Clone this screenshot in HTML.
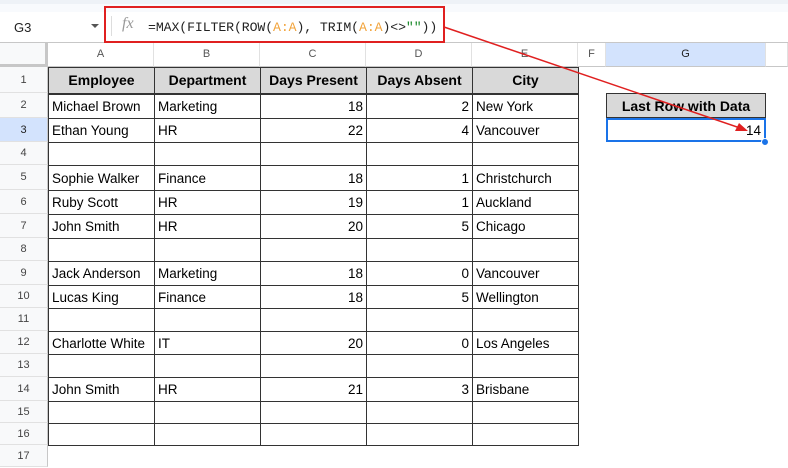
<!DOCTYPE html>
<html><head><meta charset="utf-8"><style>
*{margin:0;padding:0;box-sizing:border-box}
body{width:788px;height:468px;overflow:hidden;background:#fff;font-family:"Liberation Sans",sans-serif;position:relative}
.a{position:absolute}
.rh{position:absolute;left:0;width:48px;background:#f8f9fa;border-bottom:1px solid #e1e1e1;border-right:1px solid #c7c7c7;font-size:11px;color:#444;text-align:center}
.ch{position:absolute;top:43px;height:24px;border-right:1px solid #e1e1e1;border-bottom:1px solid #c7c7c7;background:#fff;font-size:11px;color:#555;text-align:center;line-height:23px}
table{position:absolute;left:48px;top:67px;border-collapse:collapse;table-layout:fixed}
td{border:1px solid #333;font-size:13.5px;color:#000;padding:0 3px;white-space:nowrap;overflow:hidden;font-family:"Liberation Sans",sans-serif}
td.r{text-align:right}
tr.h td{background:#d9d9d9;font-weight:bold;text-align:center;font-size:14px;border-bottom:2px solid #333}
</style></head><body>
<div class="a" style="left:0;top:0;width:788px;height:4px;background:#eef2f7"></div>
<div class="a" style="left:0;top:4px;width:788px;height:8px;background:#f8fafd"></div>
<div class="a" style="left:0;top:42px;width:788px;height:1px;background:#c7c7c7"></div>
<div class="a" style="left:14px;top:20px;font-size:13px;color:#222">G3</div>
<div class="a" style="left:91px;top:24px;width:0;height:0;border-left:4px solid transparent;border-right:4px solid transparent;border-top:4px solid #555"></div>
<div class="a" style="left:111px;top:16px;width:1px;height:20px;background:#ddd"></div>
<div class="a" style="left:122px;top:15px;font-size:16px;color:#999;font-style:italic;font-family:'Liberation Serif',serif">fx</div>
<div class="a" style="left:148px;top:20px;font-size:13.2px;font-family:'Liberation Mono',monospace;color:#222;letter-spacing:-0.1px">=MAX(FILTER(ROW(<span style="color:#f2a33a">A:A</span>), TRIM(<span style="color:#f2a33a">A:A</span>)&lt;&gt;<span style="color:#1a8a2a">""</span>))</div>
<div class="a" style="left:104px;top:6px;width:341px;height:37px;border:2px solid #e02020"></div>

<div class="a" style="left:0;top:43px;width:48px;height:24px;background:#f8f9fa;border-right:3px solid #c7c7c7;border-bottom:3px solid #c7c7c7"></div>
<div class="ch" style="left:48px;width:106px">A</div>
<div class="ch" style="left:154px;width:106px">B</div>
<div class="ch" style="left:260px;width:106px">C</div>
<div class="ch" style="left:366px;width:106px">D</div>
<div class="ch" style="left:472px;width:106px">E</div>
<div class="ch" style="left:578px;width:28px">F</div>
<div class="ch" style="left:606px;width:160px;background:#d3e3fd;color:#222">G</div>
<div class="ch" style="left:766px;width:22px"></div>

<div class="rh" style="top:67px;height:26px;line-height:26px">1</div>
<div class="rh" style="top:93px;height:25px;line-height:25px">2</div>
<div class="rh" style="top:118px;height:24px;line-height:24px;background:#d3e3fd;color:#222">3</div>
<div class="rh" style="top:142px;height:23px;line-height:23px">4</div>
<div class="rh" style="top:165px;height:25px;line-height:25px">5</div>
<div class="rh" style="top:190px;height:24px;line-height:24px">6</div>
<div class="rh" style="top:214px;height:24px;line-height:24px">7</div>
<div class="rh" style="top:238px;height:23px;line-height:23px">8</div>
<div class="rh" style="top:261px;height:24px;line-height:24px">9</div>
<div class="rh" style="top:285px;height:23px;line-height:23px">10</div>
<div class="rh" style="top:308px;height:23px;line-height:23px">11</div>
<div class="rh" style="top:331px;height:23px;line-height:23px">12</div>
<div class="rh" style="top:354px;height:23px;line-height:23px">13</div>
<div class="rh" style="top:377px;height:24px;line-height:24px">14</div>
<div class="rh" style="top:401px;height:22px;line-height:22px">15</div>
<div class="rh" style="top:423px;height:22px;line-height:22px">16</div>
<div class="rh" style="top:445px;height:22px;line-height:22px">17</div>

<table>
<colgroup><col style="width:106px"><col style="width:106px"><col style="width:106px"><col style="width:106px"><col style="width:106px"></colgroup>
<tr class="h" style="height:26px"><td>Employee</td><td>Department</td><td>Days Present</td><td>Days Absent</td><td>City</td></tr>
<tr style="height:25px"><td>Michael Brown</td><td>Marketing</td><td class="r">18</td><td class="r">2</td><td>New York</td></tr>
<tr style="height:24px"><td>Ethan Young</td><td>HR</td><td class="r">22</td><td class="r">4</td><td>Vancouver</td></tr>
<tr style="height:23px"><td></td><td></td><td></td><td></td><td></td></tr>
<tr style="height:25px"><td>Sophie Walker</td><td>Finance</td><td class="r">18</td><td class="r">1</td><td>Christchurch</td></tr>
<tr style="height:24px"><td>Ruby Scott</td><td>HR</td><td class="r">19</td><td class="r">1</td><td>Auckland</td></tr>
<tr style="height:24px"><td>John Smith</td><td>HR</td><td class="r">20</td><td class="r">5</td><td>Chicago</td></tr>
<tr style="height:23px"><td></td><td></td><td></td><td></td><td></td></tr>
<tr style="height:24px"><td>Jack Anderson</td><td>Marketing</td><td class="r">18</td><td class="r">0</td><td>Vancouver</td></tr>
<tr style="height:23px"><td>Lucas King</td><td>Finance</td><td class="r">18</td><td class="r">5</td><td>Wellington</td></tr>
<tr style="height:23px"><td></td><td></td><td></td><td></td><td></td></tr>
<tr style="height:23px"><td>Charlotte White</td><td>IT</td><td class="r">20</td><td class="r">0</td><td>Los Angeles</td></tr>
<tr style="height:23px"><td></td><td></td><td></td><td></td><td></td></tr>
<tr style="height:24px"><td>John Smith</td><td>HR</td><td class="r">21</td><td class="r">3</td><td>Brisbane</td></tr>
<tr style="height:22px"><td></td><td></td><td></td><td></td><td></td></tr>
<tr style="height:22px"><td></td><td></td><td></td><td></td><td></td></tr>
</table>

<div class="a" style="left:606px;top:93px;width:160px;height:26px;background:#d9d9d9;border:1px solid #333;border-bottom:2px solid #333;font-weight:bold;font-size:14px;text-align:center;line-height:24px">Last Row with Data</div>
<div class="a" style="left:606px;top:118px;width:160px;height:24px;border:2px solid #1a73e8;font-size:13.5px;text-align:right;padding-right:3px;line-height:21px">14</div>
<div class="a" style="left:761px;top:138px;width:8px;height:8px;border-radius:50%;background:#1a73e8;border:1px solid #fff"></div>

<svg class="a" style="left:0;top:0" width="788" height="468">
<line x1="444" y1="27" x2="740" y2="128" stroke="#e02020" stroke-width="1.5"/>
<polygon points="748,131 735,131 739,123" fill="#e02020"/>
</svg>
</body></html>
